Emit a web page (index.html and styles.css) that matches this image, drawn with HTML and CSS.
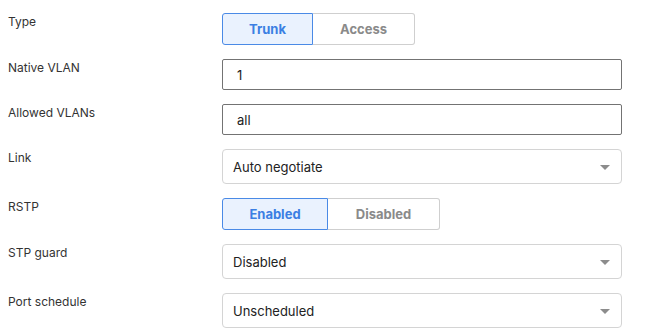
FILE: index.html
```html
<!DOCTYPE html>
<html>
<head>
<meta charset="utf-8">
<link rel="stylesheet" href="styles.css">
</head>
<body>
<div class="form">
  <div class="row">
    <div class="label">Type</div>
    <div class="seg">
      <div class="seg-item active w-trunk">Trunk</div>
      <div class="seg-item w-access">Access</div>
    </div>
  </div>
  <div class="row">
    <div class="label">Native VLAN</div>
    <div class="input">1</div>
  </div>
  <div class="row">
    <div class="label">Allowed VLANs</div>
    <div class="input">all</div>
  </div>
  <div class="row">
    <div class="label">Link</div>
    <div class="select">Auto negotiate<span class="caret"></span></div>
  </div>
  <div class="row">
    <div class="label">RSTP</div>
    <div class="seg">
      <div class="seg-item active w-enabled">Enabled</div>
      <div class="seg-item w-disabled">Disabled</div>
    </div>
  </div>
  <div class="row">
    <div class="label">STP guard</div>
    <div class="select">Disabled<span class="caret"></span></div>
  </div>
  <div class="row">
    <div class="label">Port schedule</div>
    <div class="select">Unscheduled<span class="caret"></span></div>
  </div>
</div>
</body>
</html>
```
FILE: styles.css
```css
html, body {
  margin: 0;
  padding: 0;
  background: #fff;
}
body {
  font-family: Inter, "Liberation Sans", sans-serif;
  font-size: 13px;
  color: #333;
}
.form {
  display: flex;
  flex-direction: column;
  gap: 14px;
  padding: 13px 0 0 8px;
}
.row {
  display: flex;
  align-items: flex-start;
}
.label {
  width: 214px;
  flex: none;
  font-size: 12px;
  line-height: 18px;
  color: #333;
}
.seg {
  display: flex;
  height: 32px;
  box-sizing: border-box;
}
.seg-item {
  box-sizing: border-box;
  height: 32px;
  display: flex;
  align-items: center;
  justify-content: center;
  font-weight: 700;
  color: #8a8a8a;
  border: 1px solid #cfcfcf;
  border-left: none;
  background: #fff;
}
.seg-item:first-child {
  border-left: 1px solid #cfcfcf;
  border-radius: 3px 0 0 3px;
}
.seg-item:last-child {
  border-radius: 0 3px 3px 0;
}
.seg-item.active {
  color: #3b7fe3;
  background: #eaf2fe;
  border: 1px solid #4a8ae6;
}
.w-trunk { width: 91px; }
.w-access { width: 102px; }
.w-enabled { width: 106px; }
.w-disabled { width: 112px; }
.input {
  box-sizing: border-box;
  width: 400px;
  height: 31px;
  border: 1px solid #737373;
  border-radius: 2px;
  padding: 0 14px;
  display: flex;
  align-items: center;
  color: #222;
}
.select {
  position: relative;
  box-sizing: border-box;
  width: 400px;
  height: 35px;
  border: 1px solid #d4d4d4;
  border-radius: 4px;
  padding: 0 10px;
  display: flex;
  align-items: center;
  color: #222;
}
.caret {
  position: absolute;
  right: 11px;
  top: 50%;
  margin-top: -2px;
  width: 0;
  height: 0;
  border-left: 5px solid transparent;
  border-right: 5px solid transparent;
  border-top: 5px solid #8c8c8c;
}
```
